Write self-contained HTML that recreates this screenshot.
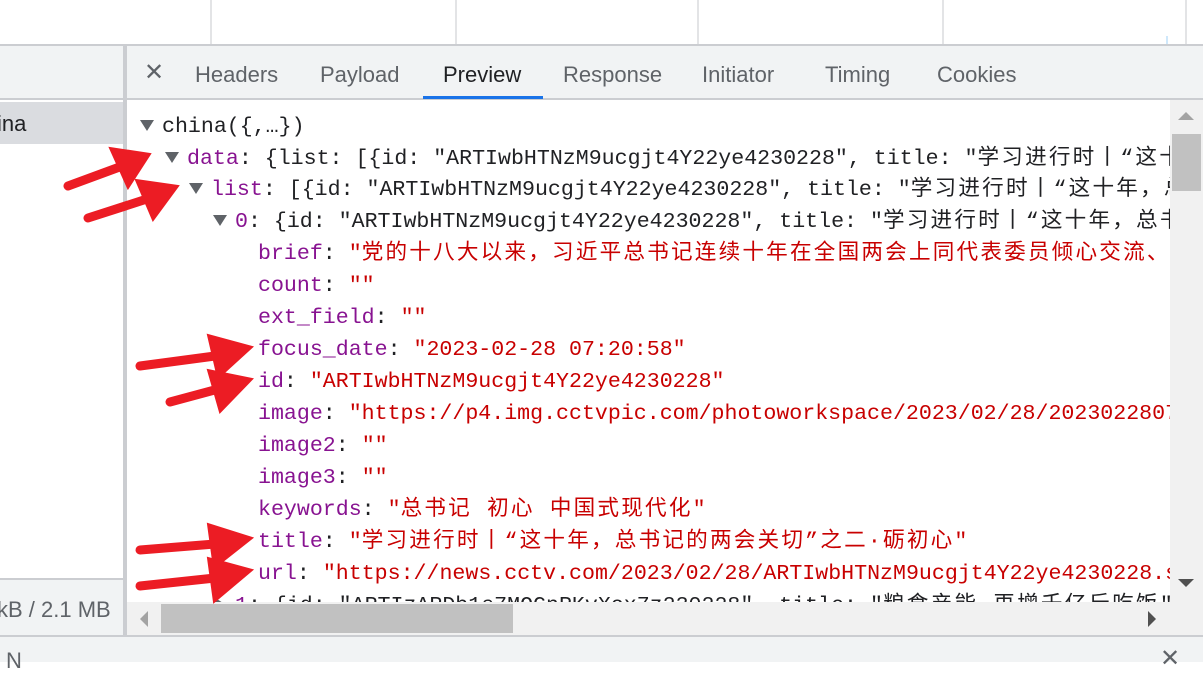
<!DOCTYPE html>
<html><head><meta charset="utf-8"><style>
*{margin:0;padding:0;box-sizing:border-box}
body{width:1203px;height:662px;overflow:hidden;background:#fff;position:relative;font-family:"Liberation Sans","Noto Sans CJK SC",sans-serif}
.abs{position:absolute}
.vl{position:absolute;top:0;height:44px;width:2px;background:#e3e4e6}
.tab{position:absolute;top:62px;font-size:22px;color:#5f6368}
.code{position:absolute;left:127px;top:102px;width:1043px;height:500px;overflow:hidden;font-family:"Liberation Mono","Noto Sans CJK SC",monospace;font-size:21.6px;color:#202124}
.ln{position:absolute;white-space:pre;height:32px;line-height:32px}
.k{color:#881391}.s{color:#c80000}
.c{letter-spacing:2.2px}
.tri{display:inline-block;width:0;height:0;border-left:7px solid transparent;border-right:7px solid transparent;border-top:11px solid #5f6368;margin-right:8px;vertical-align:1px}
</style></head><body>
<div class="vl" style="left:210px"></div>
<div class="vl" style="left:455px"></div>
<div class="vl" style="left:697px"></div>
<div class="vl" style="left:942px"></div>
<div class="vl" style="left:1185px"></div>
<div class="abs" style="left:1166px;top:36px;width:2px;height:8px;background:#cfe8fb"></div>
<div class="abs" style="left:0;top:44px;width:1203px;height:2px;background:#cbcdd1"></div>
<div class="abs" style="left:0;top:46px;width:123px;height:591px;background:#fff"></div>
<div class="abs" style="left:0;top:46px;width:123px;height:54px;background:#f1f3f4"></div>
<div class="abs" style="left:0;top:98px;width:123px;height:2px;background:#cbcdd1"></div>
<div class="abs" style="left:0;top:102px;width:123px;height:42px;background:#dadce0;font-size:22px;color:#202124;line-height:44px;text-indent:-3px">ina</div>
<div class="abs" style="left:0;top:578px;width:123px;height:2px;background:#cbcdd1"></div>
<div class="abs" style="left:0;top:580px;width:123px;height:57px;background:#f1f3f4;font-size:22px;color:#5f6368;line-height:60px;text-indent:-3px">kB / 2.1 MB</div>
<div class="abs" style="left:123px;top:46px;width:4px;height:591px;background:#cbcdd1"></div>
<div class="abs" style="left:127px;top:46px;width:1076px;height:52px;background:#f1f3f4"></div>
<div class="abs" style="left:127px;top:98px;width:1076px;height:2px;background:#cbcdd1"></div>
<div class="tab" style="left:144px;top:58px;font-size:24px">✕</div>
<div class="tab" style="left:195px">Headers</div>
<div class="tab" style="left:320px">Payload</div>
<div class="tab" style="left:443px;color:#202124">Preview</div>
<div class="tab" style="left:563px">Response</div>
<div class="tab" style="left:702px">Initiator</div>
<div class="tab" style="left:825px">Timing</div>
<div class="tab" style="left:937px">Cookies</div>
<div class="abs" style="left:423px;top:96px;width:120px;height:3px;background:#1a73e8"></div>
<div class="code">
<div class="ln" style="left:13px;top:9px"><span class="tri"></span>china({,…})</div>
<div class="ln" style="left:38px;top:41px"><span class="tri"></span><span class="k">data</span>: {list: [{id: "ARTIwbHTNzM9ucgjt4Y22ye4230228", title: "<span class="c">学习进行时丨“这十年，总书记的两会关切”之二·砺初心</span>"</div>
<div class="ln" style="left:62px;top:72px"><span class="tri"></span><span class="k">list</span>: [{id: "ARTIwbHTNzM9ucgjt4Y22ye4230228", title: "<span class="c">学习进行时丨“这十年，总书记的两会关切”</span>"</div>
<div class="ln" style="left:86px;top:104px"><span class="tri"></span><span class="k">0</span>: {id: "ARTIwbHTNzM9ucgjt4Y22ye4230228", title: "<span class="c">学习进行时丨“这十年，总书记的两会</span>"</div>
<div class="ln" style="left:131px;top:136px"><span class="k">brief</span>: <span class="s">"<span class="c">党的十八大以来，习近平总书记连续十年在全国两会上同代表委员倾心交流、共商国是</span>"</span></div>
<div class="ln" style="left:131px;top:168px"><span class="k">count</span>: <span class="s">""</span></div>
<div class="ln" style="left:131px;top:200px"><span class="k">ext_field</span>: <span class="s">""</span></div>
<div class="ln" style="left:131px;top:232px"><span class="k">focus_date</span>: <span class="s">"2023-02-28 07:20:58"</span></div>
<div class="ln" style="left:131px;top:264px"><span class="k">id</span>: <span class="s">"ARTIwbHTNzM9ucgjt4Y22ye4230228"</span></div>
<div class="ln" style="left:131px;top:296px"><span class="k">image</span>: <span class="s">"https://p4.img.cctvpic.com/photoworkspace/2023/02/28/2023022807"</span></div>
<div class="ln" style="left:131px;top:328px"><span class="k">image2</span>: <span class="s">""</span></div>
<div class="ln" style="left:131px;top:360px"><span class="k">image3</span>: <span class="s">""</span></div>
<div class="ln" style="left:131px;top:392px"><span class="k">keywords</span>: <span class="s">"<span class="c">总书记 初心 中国式现代化</span>"</span></div>
<div class="ln" style="left:131px;top:424px"><span class="k">title</span>: <span class="s">"<span class="c">学习进行时丨“这十年，总书记的两会关切”之二·砺初心</span>"</span></div>
<div class="ln" style="left:131px;top:456px"><span class="k">url</span>: <span class="s">"https://news.cctv.com/2023/02/28/ARTIwbHTNzM9ucgjt4Y22ye4230228.shtml"</span></div>
<div class="ln" style="left:86px;top:488px"><span class="tri" style="transform:rotate(-90deg)"></span><span class="k">1</span>: {id: "ARTIzARDb1s7MOGnRKvXox7z230228", title: "<span class="c">粮食产能 再增千亿斤吃饭</span>"</div>
</div>
<div class="abs" style="left:1170px;top:100px;width:33px;height:502px;background:#f1f1f1"></div>
<div class="abs" style="left:1178px;top:112px;width:0;height:0;border-left:8px solid transparent;border-right:8px solid transparent;border-bottom:8px solid #a3a3a3"></div>
<div class="abs" style="left:1172px;top:134px;width:29px;height:57px;background:#c1c1c1"></div>
<div class="abs" style="left:1178px;top:579px;width:0;height:0;border-left:8px solid transparent;border-right:8px solid transparent;border-top:8px solid #505050"></div>
<div class="abs" style="left:127px;top:602px;width:1076px;height:33px;background:#f1f1f1"></div>
<div class="abs" style="left:140px;top:611px;width:0;height:0;border-top:8px solid transparent;border-bottom:8px solid transparent;border-right:8px solid #a3a3a3"></div>
<div class="abs" style="left:161px;top:604px;width:352px;height:29px;background:#c1c1c1"></div>
<div class="abs" style="left:1148px;top:611px;width:0;height:0;border-top:8px solid transparent;border-bottom:8px solid transparent;border-left:8px solid #505050"></div>
<div class="abs" style="left:0;top:635px;width:1203px;height:2px;background:#cbcdd1"></div>
<div class="abs" style="left:0;top:637px;width:1203px;height:25px;background:#f1f3f4"></div>
<div class="abs" style="left:6px;top:648px;font-size:22px;color:#5f6368">N</div>
<div class="abs" style="left:1160px;top:644px;font-size:24px;color:#5f6368">✕</div>
<svg class="abs" style="left:0;top:0" width="1203" height="662">
<g fill="#ec1c24" stroke="#ec1c24" stroke-linecap="round">
<line x1="68" y1="186" x2="125" y2="165" stroke-width="9"/><polygon points="150,154 110,148 128,188" stroke-width="2"/>
<line x1="88" y1="218" x2="150" y2="198" stroke-width="9"/><polygon points="178,186 136,180 153,220" stroke-width="2"/>
<line x1="140" y1="366" x2="215" y2="356" stroke-width="9"/><polygon points="252,347 208,335 218,378" stroke-width="2"/>
<line x1="170" y1="402" x2="222" y2="388" stroke-width="9"/><polygon points="252,379 208,370 220,412" stroke-width="2"/>
<line x1="140" y1="550" x2="215" y2="544" stroke-width="9"/><polygon points="252,538 208,524 214,568" stroke-width="2"/>
<line x1="140" y1="586" x2="215" y2="578" stroke-width="9"/><polygon points="252,570 208,558 214,602" stroke-width="2"/>
</g></svg>
</body></html>
